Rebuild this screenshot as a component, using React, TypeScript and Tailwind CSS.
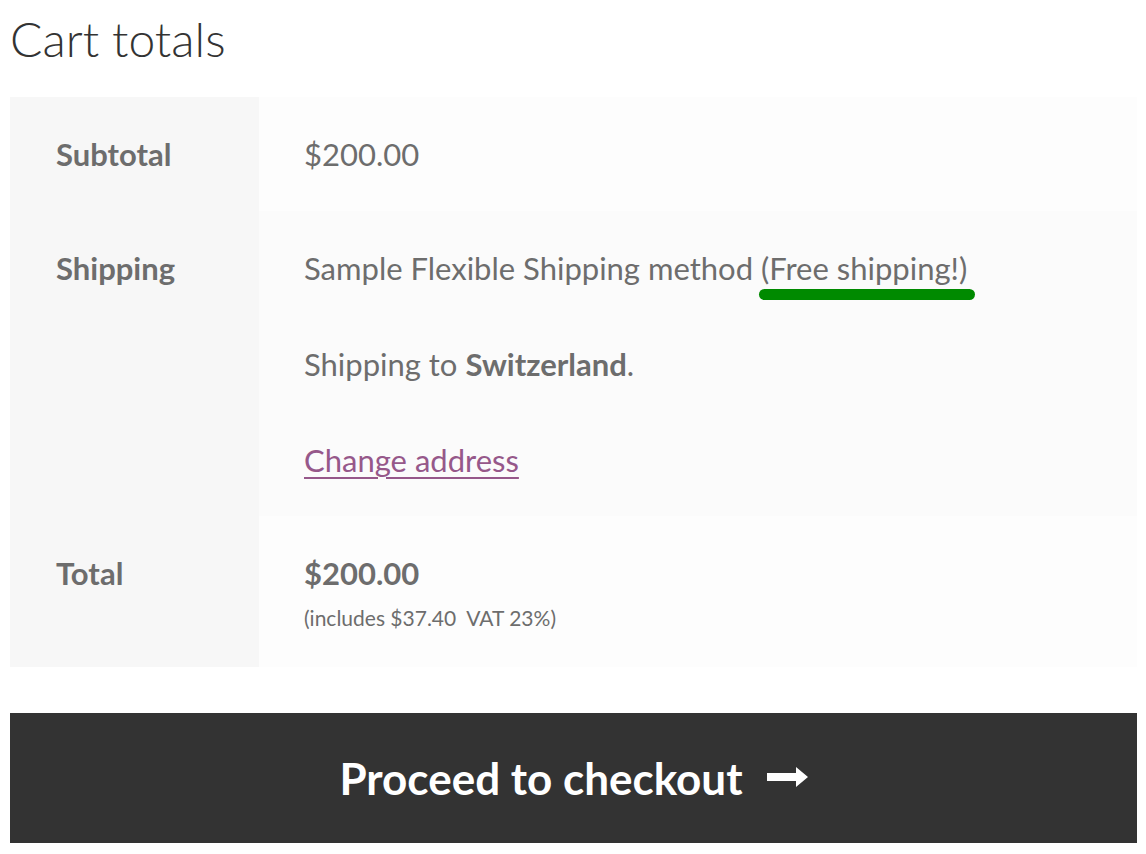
export default function App() {
  return (
    <div className="min-h-[854px] bg-white px-[10px] font-[Lato,sans-serif] w-[1147px]">
      <h2 className="pt-[8px] pb-[28px] text-[48px] leading-[61px] font-light text-[#333333]">Cart totals</h2>

      <div className="grid grid-cols-[249px_1fr] text-[31px] leading-[48px] text-[#6d6d6d]">
        {/* Subtotal */}
        <div className="bg-[#f7f7f7] pl-[46px] py-[33px] font-bold">Subtotal</div>
        <div className="bg-[#fdfdfd] pl-[45px] py-[33px]">$200.00</div>

        {/* Shipping */}
        <div className="bg-[#f7f7f7] pl-[46px] pt-[33px] pb-[32px] font-bold">Shipping</div>
        <div className="bg-[#fbfbfb] pl-[45px] pt-[33px] pb-[32px] flex flex-col gap-[48px]">
          <p>
            Sample Flexible Shipping method{' '}
            <span className="relative">
              (Free shipping!)
              <span className="absolute left-[-2px] right-[-8px] top-[40px] h-[11px] rounded-full bg-[#008a00]" />
            </span>
          </p>
          <p>
            Shipping to <strong className="font-bold">Switzerland</strong>.
          </p>
          <p>
            <a href="#" className="text-[#96588a] underline underline-offset-[5px] decoration-2">
              Change address
            </a>
          </p>
        </div>

        {/* Total */}
        <div className="bg-[#f7f7f7] pl-[46px] pt-[33px] pb-[28px] font-bold">Total</div>
        <div className="bg-[#fdfdfd] pl-[45px] pt-[33px] pb-[28px]">
          <div className="font-bold">$200.00</div>
          <div className="text-[21px] leading-[42px]">(includes $37.40&nbsp; VAT 23%)</div>
        </div>
      </div>

      <button className="mt-[46px] w-full h-[130px] bg-[#333333] text-white flex items-center justify-center gap-[24px]">
        <span className="text-[44px] font-bold leading-none">Proceed to checkout</span>
        <svg width="41" height="20" viewBox="0 0 41 20" fill="white" className="mt-[-2px]">
          <path d="M0 6 H29 V0 L41 10 L29 20 V14 H0 Z" strokeLinejoin="round" />
        </svg>
      </button>
    </div>
  )
}
